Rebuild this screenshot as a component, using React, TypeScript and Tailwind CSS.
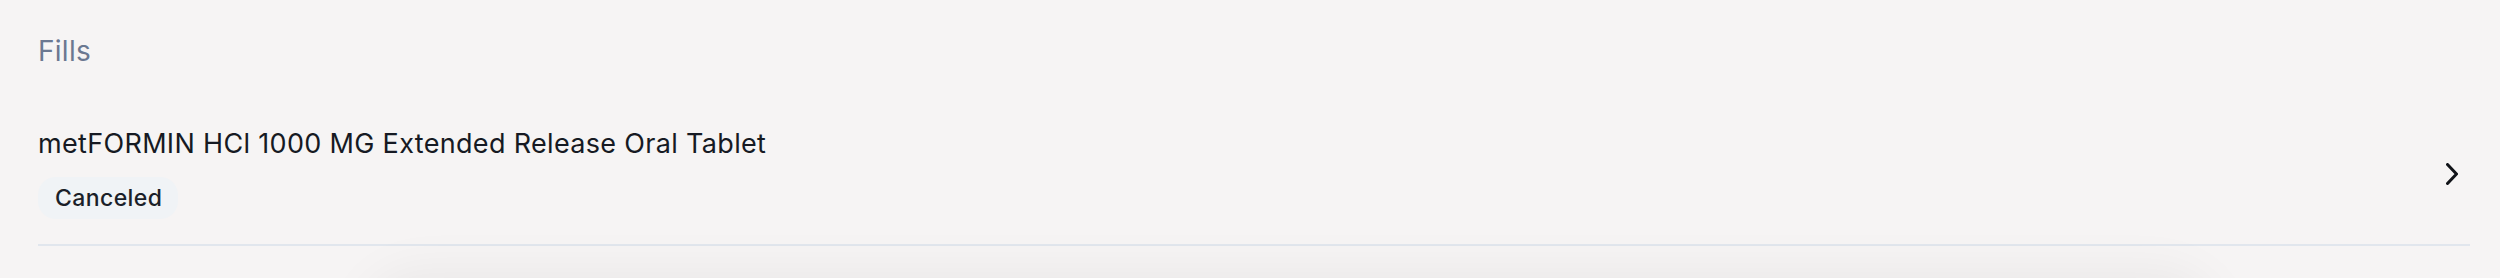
import React from "react";

export default function App() {
  return (
    <div
      className="relative h-[278px] w-full overflow-hidden bg-[#f6f4f4]"
      style={{ fontFamily: "Inter, 'Noto Sans', sans-serif" }}
    >
      <div className="pl-[38px] pr-[30px] pt-[33px]">
        <h2 className="text-[28px] leading-[36px] font-normal tracking-[0.01em] text-[#6b7891]">Fills</h2>
        <div className="mt-[59px] flex items-center border-b-2 border-[#e1e6ed] pb-[25px]">
          <div className="flex flex-1 flex-col items-start">
            <div className="text-[27px] leading-[32px] tracking-[0.012em] text-[#161a23]">
              metFORMIN HCl 1000 MG Extended Release Oral Tablet
            </div>
            <span className="mt-[17px] inline-flex h-[42px] items-center rounded-[18px] bg-[#f0f3f6] pl-[17px] pr-[16px] text-[23px] leading-[42px] font-medium tracking-[0.018em] text-[#1b1f29]">
              Canceled
            </span>
          </div>
          <svg
            width="12"
            height="22"
            viewBox="0 0 12 22"
            fill="none"
            className="mr-[12px] shrink-0"
            aria-hidden="true"
          >
            <polyline
              points="1.5,1.5 10.5,11 1.5,20.5"
              stroke="#111318"
              strokeWidth="3"
              strokeLinecap="round"
              strokeLinejoin="round"
            />
          </svg>
        </div>
      </div>
      <div className="pointer-events-none absolute left-[380px] right-[300px] top-[300px] h-[80px] rounded-[40px] bg-[#f6f4f4] shadow-[0_-10px_50px_20px_rgba(0,0,0,0.05)]" />
    </div>
  );
}
